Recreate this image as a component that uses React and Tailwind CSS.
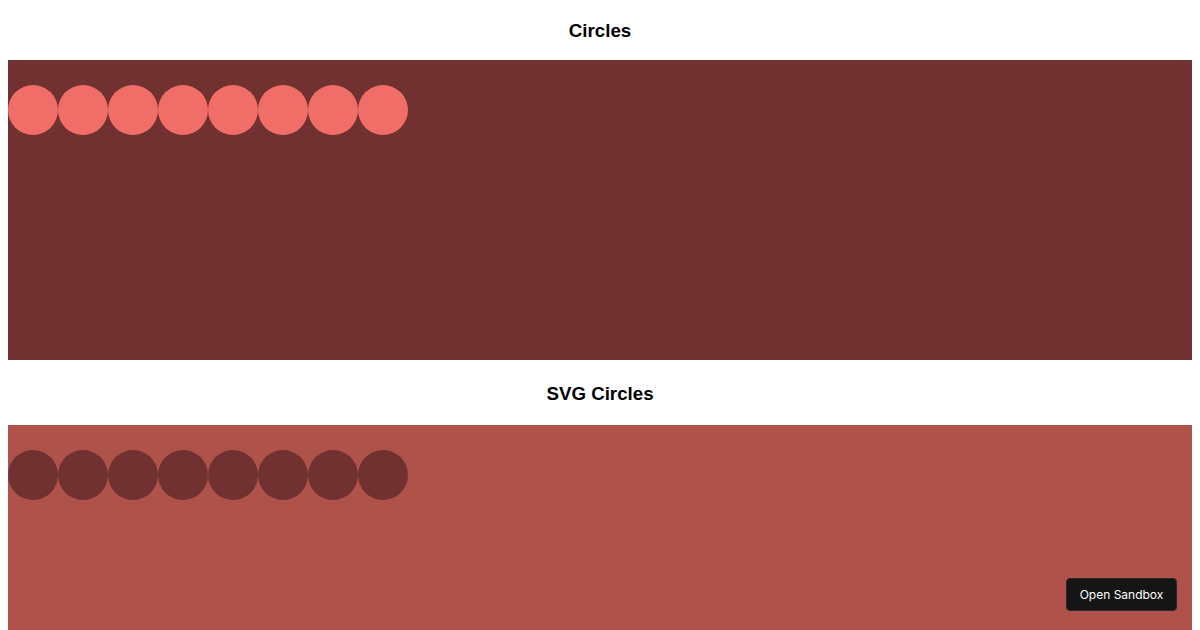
export default function App() {
  const n = [0, 1, 2, 3, 4, 5, 6, 7];
  return (
    <div className="bg-white min-h-[630px] px-2 relative" style={{ fontFamily: '"Liberation Sans", Arial, sans-serif' }}>
      <div className="h-[60px] flex items-center justify-center pt-[2px]">
        <h3 className="text-[18.72px] font-bold text-black">Circles</h3>
      </div>
      <div className="h-[300px] bg-[#713130] pt-[25px]">
        <div className="flex">
          {n.map((i) => (
            <div key={i} className="w-[50px] h-[50px] rounded-full bg-[#f06e67]" />
          ))}
        </div>
      </div>
      <div className="h-[65px] flex items-center justify-center pt-[4px]">
        <h3 className="text-[18.72px] font-bold text-black">SVG Circles</h3>
      </div>
      <div className="h-[300px] bg-[#ae524a] pt-[25px]">
        <svg width="400" height="50" className="block">
          {n.map((i) => (
            <circle key={i} cx={25 + i * 50} cy={25} r={25} fill="#713130" />
          ))}
        </svg>
      </div>
      <button
        className="fixed right-[23px] bottom-[19px] w-[111px] h-[33px] rounded-[4px] bg-[#151515] border border-[#2a2a2a] text-white text-[12px] flex items-center justify-center"
        style={{ fontFamily: 'Inter, "Liberation Sans", sans-serif' }}
      >
        Open Sandbox
      </button>
    </div>
  );
}
